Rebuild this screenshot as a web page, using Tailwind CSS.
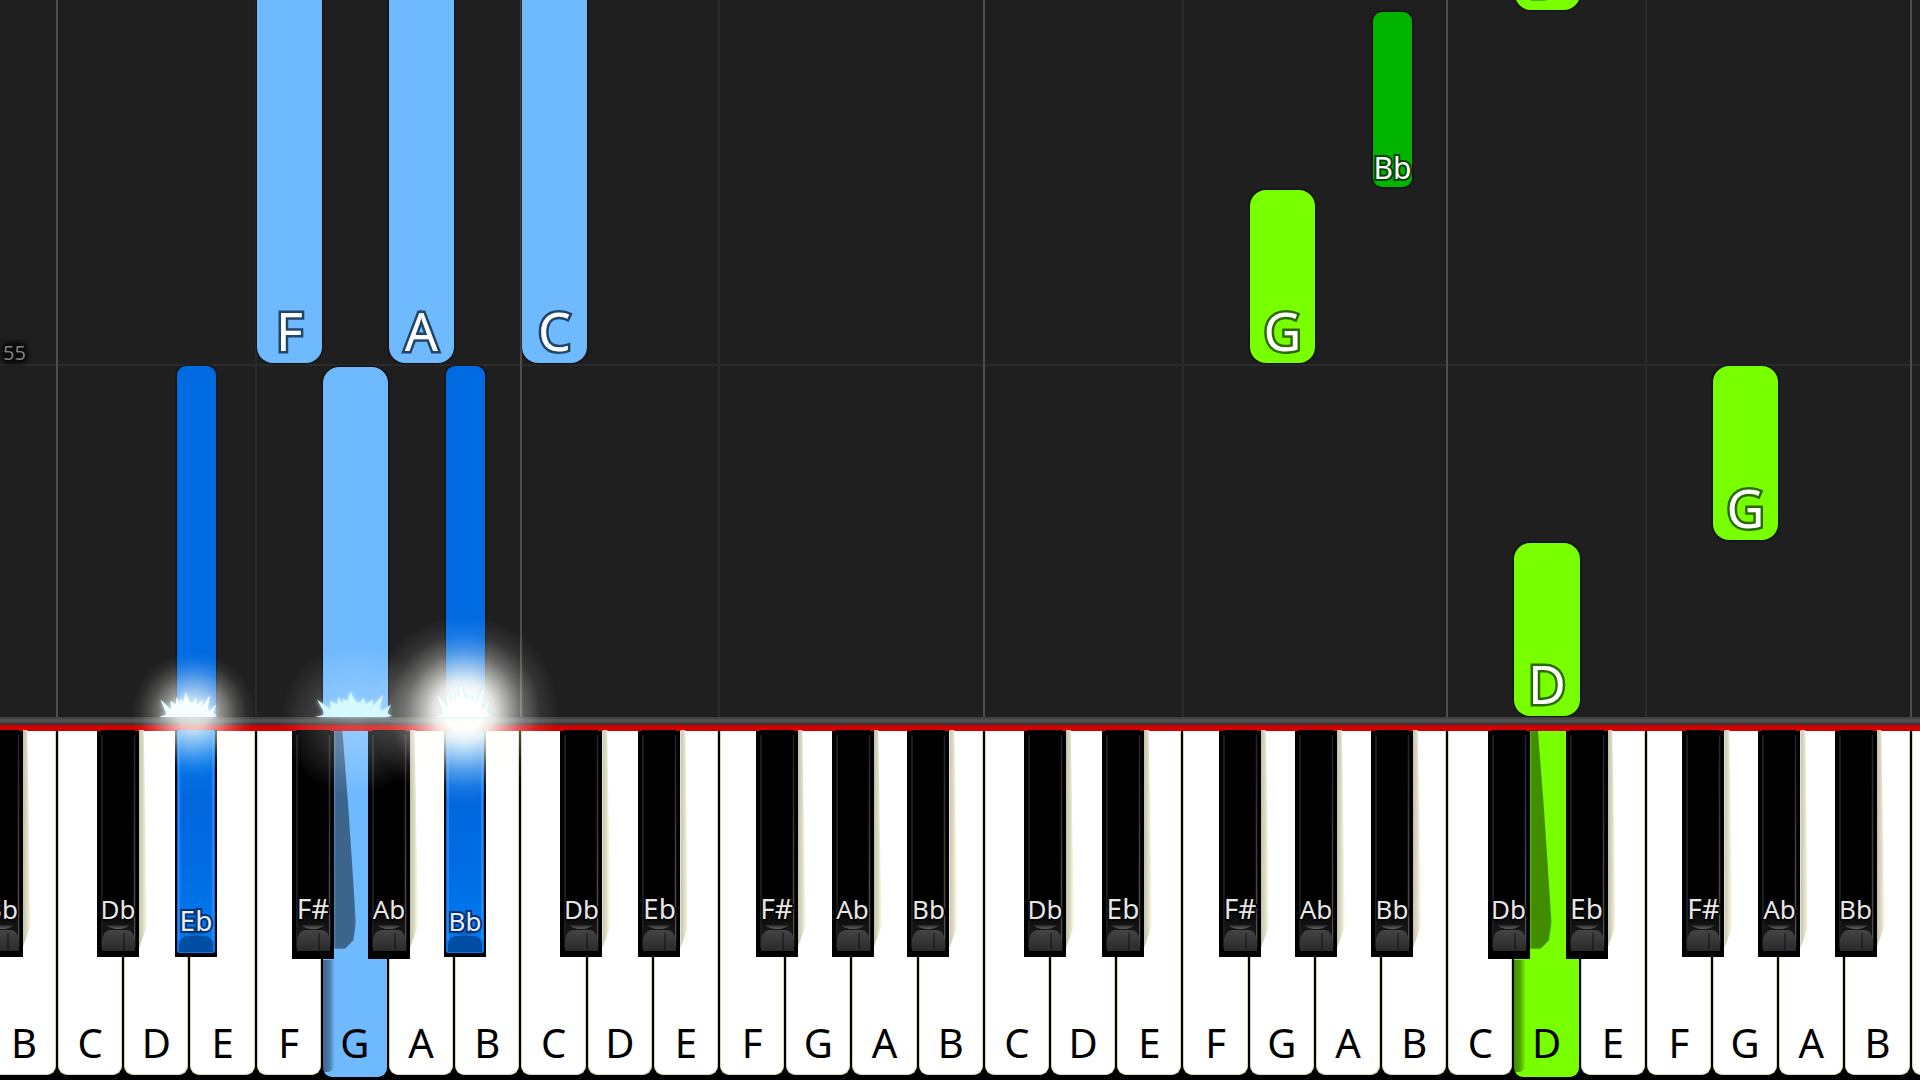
<!DOCTYPE html>
<html lang="en">
<head>
<meta charset="utf-8">
<title>Piano roll</title>
<script src="https://cdn.jsdelivr.net/npm/@tailwindcss/browser@4"></script>
</head>
<body class="bg-black">
<main class="relative flex h-screen flex-col overflow-hidden font-['Noto_Sans','Open_Sans',sans-serif]">
  <section id="roll" aria-label="Falling notes" class="relative min-h-0 flex-1 overflow-hidden bg-[#1f1f1f]">
    <div class="absolute inset-x-0 bottom-[351px] h-[2px] bg-[#2b2b2b]"></div>
    <span class="absolute bottom-[354px] left-[3px] rounded-md bg-black/50 text-[20px] leading-none text-[#858585] shadow-[0_0_4px_2px_#00000080] font-['Open_Sans','Noto_Sans',sans-serif] [text-shadow:0_0_3px_#000,0_0_3px_#000]">55</span>
  </section>
  <div class="h-2 shrink-0 bg-linear-to-b from-[#3c3c3c] via-[#555] to-[#303030]"></div>
  <div class="h-[6px] shrink-0 bg-[#d20000]"></div>
  <section id="keyboard" aria-label="Keyboard" class="relative h-[349px] shrink-0 bg-black">
    <div id="whites" class="flex h-[344px]"></div>
  </section>
  <div id="flashes" class="pointer-events-none absolute inset-0 overflow-hidden"></div>
</main>

<script>
const STAGE = 1920, OCTAVE = 463.5, KEY = OCTAVE / 7, FIRST_C = 57;
const pct = v => (v / STAGE * 100).toFixed(4) + '%';
const roll = document.getElementById('roll');
const keyboard = document.getElementById('keyboard');
const whites = document.getElementById('whites');
const add = (parent, html) => parent.insertAdjacentHTML('beforeend', html);

/* Octave and F guide lines */
for (let o = 0; o < 5; o++) {
  const x = FIRST_C + o * OCTAVE;
  add(roll, `<div class="absolute inset-y-0 w-[2px] bg-[#4d4d4d]" style="left:${pct(x - 1)}"></div>`);
  add(roll, `<div class="absolute inset-y-0 w-[2px] bg-[#2a2a2a]" style="left:${pct(x + 3 * KEY - 1)}"></div>`);
}

/* Falling notes: label, left, distance above the key line, height, kind, width */
const NOTE = {
  lightBlue: 'bg-[#6fb9ff] rounded-[16px] pb-[6px] text-[52px] [-webkit-text-stroke:5px_#1f4467]',
  blue: 'bg-[#006be1] rounded-[9px] pb-1 text-[30px] [-webkit-text-stroke:4px_#00264f]',
  lime: 'bg-[#78ff00] rounded-[16px] pb-[6px] text-[52px] [-webkit-text-stroke:5px_#2b6a00]',
  green: 'bg-[#00b400] rounded-[9px] pb-1 text-[30px] [-webkit-text-stroke:4px_#004000]'
};
[
  ['F', 257, 354, 420, 'lightBlue', 65], ['A', 389, 354, 420, 'lightBlue', 65], ['C', 522, 354, 420, 'lightBlue', 65],
  ['', 177, 0, 351, 'blue', 39], ['', 323, 0, 350, 'lightBlue', 65], ['', 446, 0, 351, 'blue', 39],
  ['G', 1250, 354, 173, 'lime', 65], ['Bb', 1373, 530, 175, 'green', 39], ['D', 1515, 707, 173, 'lime', 65],
  ['D', 1514, 1, 173, 'lime', 66], ['G', 1713, 177, 174, 'lime', 65]
].forEach(([label, x, up, h, kind, w]) => add(roll,
  `<div class="absolute flex items-end justify-center leading-none text-white shadow-[0_0_2px_1px_#0009] [paint-order:stroke_fill] ${NOTE[kind]} ${up === 0 ? 'rounded-b-none' : ''}" style="left:${pct(x)};width:${pct(w)};bottom:${up}px;height:${h}px">${label}</div>`));

/* White keys */
const names = ['C', 'D', 'E', 'F', 'G', 'A', 'B'];
whites.style.marginLeft = pct(FIRST_C - KEY);
for (let i = -1; i < 29; i++) {
  const pressed = i === 4 ? 'bg-[#6fb9ff]' : i === 22 ? 'bg-[#78ff00]' : '';
  const side = pressed ? '<span class="absolute bottom-[5px] left-0 h-[112px] w-[12px] rounded-br-lg bg-linear-to-r from-black/45 via-black/35 to-transparent"></span>' : '';
  const face = pressed ? pressed + ' h-[346px] pb-[14px]' : 'h-[344px] bg-white pb-[11px] border-x border-b border-[#d9d6b4]';
  add(whites, `<div class="shrink-0 px-px" style="width:${pct(KEY)}"><button type="button" class="relative flex w-full items-end justify-center rounded-b-[9px] text-[40px] leading-none text-black ${face}">${side}${names[(i + 7) % 7]}</button></div>`);
}
whites.style.width = '100%';

/* Black keys */
const darkFace = `
  <rect y="1" width="42" height="226" fill="#000"/><rect x="4" width="34" height="4" fill="#000"/>
  <path d="M5 5V218" stroke="#262626" stroke-width="1.5"/><path d="M37.500 5V217" stroke="url(#edge)" stroke-width="1.500"/>
  <path d="M6 168h30v40H6z" fill="url(#low)"/>
  <path d="M9 195h24q-4 4-12 4t-12-4z" fill="url(#lip)"/>
  <path d="M5 221V211q1-10 8-11h17q7 1 8 11v10z" fill="url(#cap)"/><path d="M27 203v18" stroke="#111"/>`;
const blueFace = `
  <rect width="42" height="227" fill="#000"/><rect x="2" width="38" height="223" rx="2" fill="url(#blue)"/>
  <path d="M4 2V210M38 2V210" stroke="#2b91ff" stroke-width="1.500"/>
  <path d="M4 222V215q1-9 9-9h16q8 0 9 9v7z" fill="#004da4"/><path d="M10 201h22q-4 5-11 5t-11-5z" fill="#0a63c4"/>`;
add(keyboard, `<svg class="absolute h-0 w-0" aria-hidden="true"><defs>
  <linearGradient id="edge" x1="0" y1="0" x2="0" y2="218" gradientUnits="userSpaceOnUse"><stop stop-color="#222"/><stop offset="1" stop-color="#555"/></linearGradient>
  <linearGradient id="low" x1="0" y1="0" x2="0" y2="1"><stop stop-color="#000"/><stop offset="1" stop-color="#1b1b1b"/></linearGradient>
  <linearGradient id="lip" x1="0" y1="0" x2="0" y2="1"><stop stop-color="#222"/><stop offset="1" stop-color="#666"/></linearGradient>
  <linearGradient id="cap" x1="0" y1="0" x2="0" y2="1"><stop stop-color="#444"/><stop offset="1" stop-color="#2a2a2a"/></linearGradient>
  <linearGradient id="blue" x1="0" y1="0" x2="0" y2="1"><stop stop-color="#0a86f5"/><stop offset=".3" stop-color="#0066dc"/><stop offset=".6" stop-color="#006ce4"/><stop offset="1" stop-color="#007cee"/></linearGradient>
</defs></svg>`);
const blacks = [['Db', 40], ['Eb', 118], ['F#', 235], ['Ab', 311], ['Bb', 387]];
for (let o = -1; o < 4; o++) blacks.forEach(([label, dx], n) => {
  const x = FIRST_C + o * OCTAVE + dx;
  if (x < -42) return;
  const pressed = o === 0 && (n === 1 || n === 4);
  const overLit = (o === 0 && n === 2) || (o === 3 && n === 0);
  const deep = overLit || (o === 0 && n === 3) || (o === 3 && n === 1);
  const shadow = pressed ? '' : overLit
    ? '<span class="absolute left-full top-0 h-[219px] w-[22px] bg-black/45 blur-[1px] [clip-path:polygon(0_0,38%_0,65%_35%,100%_88%,88%_96%,50%_100%,0_100%)]"></span>'
    : '<span class="absolute left-full top-0 h-[218px] w-[8px] bg-linear-to-r from-[#c3c0ad] via-[#dddac5] to-[#fffde8] [clip-path:polygon(0_0,60%_0,100%_90%,0_100%)]"></span>';
  const size = label === 'Eb' || label === 'F#' ? 'text-[28px]' : 'text-[26px]';
  const look = pressed ? 'pb-[23px] text-[#e8eefc] [-webkit-text-stroke:4px_#003070]' : 'pb-[35px] text-[#e6e6e6] [-webkit-text-stroke:3px_#000]';
  add(keyboard, `<div class="absolute -top-px" style="left:${pct(x)};width:${pct(42)}">${shadow}
    <button type="button" class="relative flex h-[227px] w-full items-end justify-center leading-none [paint-order:stroke_fill] ${size} ${look}">
      <svg class="absolute inset-0 h-full w-full" viewBox="0 0 42 227" preserveAspectRatio="none">${pressed ? blueFace : darkFace}</svg>
      <span class="relative">${label}</span></button>${deep ? '<span class="absolute inset-x-0 top-full h-[2px] bg-black"></span>' : ''}</div>`);
});

/* Flashes where sounding notes meet the keys */
const flashes = document.getElementById('flashes');
const glow = (x, up, size, look) => add(flashes,
  `<div class="absolute ${look}" style="left:${pct(x)};width:${size}px;height:${size}px;margin-left:${-size / 2}px;bottom:${up - size / 2}px"></div>`);
glow(193, 366, 124, 'bg-[radial-gradient(circle_closest-side,#fffffad9,#fffffac0_25%,#fffffa80_45%,#fffffa38_68%,#fffffa10_86%,transparent)]');
glow(355, 360, 150, 'bg-[radial-gradient(circle_closest-side,#ffffff48,#ffffff28_50%,transparent)]');
glow(464, 369, 190, 'bg-[radial-gradient(circle_closest-side,#fffffa_20%,#fffffae0_32%,#fffffaa0_45%,#fffffa50_62%,#fffffa18_80%,transparent)]');
const spark = (x, w, h, fill) => add(flashes,
  `<svg class="absolute bottom-[363px] drop-shadow-[0_0_2px_#bff0ff]" style="left:${pct(x)};width:${pct(w)}" height="${h}" viewBox="0 0 76 26" preserveAspectRatio="none"><path fill="${fill}" d="M0 26 8 24 10 23 2 8 14 17 16 18 15 9 22 13 23 5 27 12 28 7 32 10 35 0 40 10 45 11 48 6 50 13 57 8 57 15 67 3 64 16 66 20 75 13 71 22 76 25 70 26z"/></svg>`);
spark(159, 58, 25, '#f6feff');
spark(315, 77, 25, '#d6f9ff');
spark(436, 54, 32, '#ffffff');
</script>
</body>
</html>
